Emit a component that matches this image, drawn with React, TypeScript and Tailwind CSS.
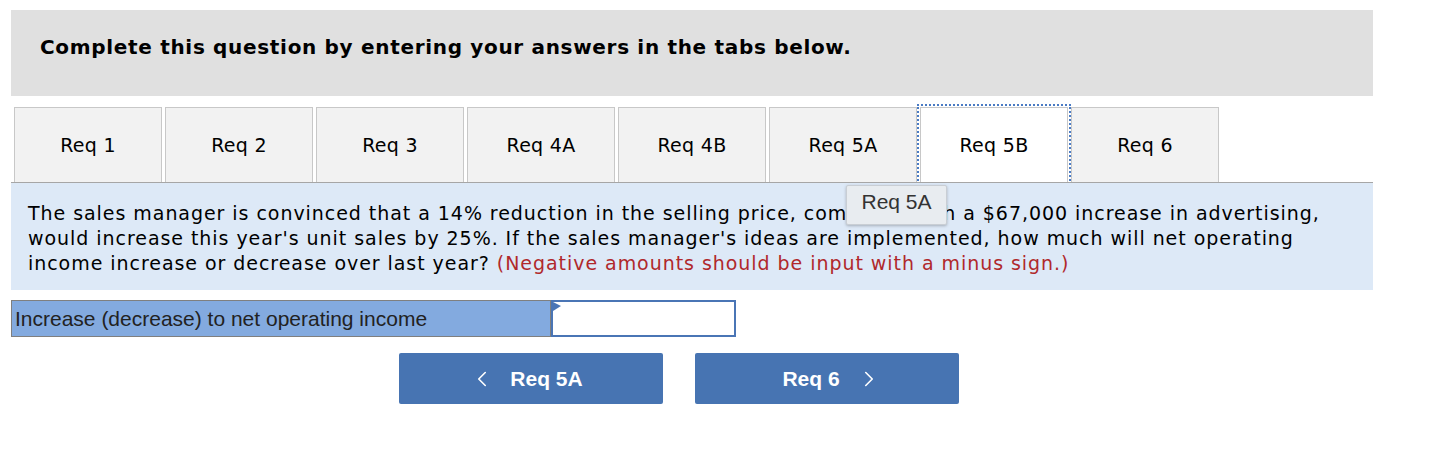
import { ChevronLeft, ChevronRight } from "lucide-react";

const tabs = ["Req 1", "Req 2", "Req 3", "Req 4A", "Req 4B", "Req 5A", "Req 5B", "Req 6"];

export default function App() {
  const active = "Req 5B";

  return (
    <div className="min-h-[450px] bg-white pt-[10px] pl-[11px] font-['DejaVu_Sans',sans-serif] text-black">
      <div className="w-[1362px]">
        <div className="flex h-[86px] bg-[#e0e0e0] pt-[24px] pl-[29px]">
          <h1 className="text-[20px] leading-[26px] font-bold tracking-[0.68px]">
            Complete this question by entering your answers in the tabs below.
          </h1>
        </div>

        <div className="mt-[11px] flex gap-[3px] border-b border-[#a6a6a6] pl-[3px]">
          {tabs.map((t) => {
            const isActive = t === active;
            return (
              <div
                key={t}
                className={
                  isActive
                    ? "flex h-[75px] w-[148px] items-center justify-center border border-b-0 border-[#c8c8c8] bg-white text-[19px] tracking-[0.3px] outline-2 outline-offset-1 outline-dotted outline-[#4a7bc4]"
                    : "flex h-[75px] w-[148px] items-center justify-center border border-b-0 border-[#c8c8c8] bg-[#f2f2f2] text-[19px] tracking-[0.3px]"
                }
              >
                {t}
              </div>
            );
          })}
        </div>

        <div className="relative bg-[#dde9f7] px-[17px] pt-[18px] pb-[14px] text-[19px] leading-[25px] tracking-[0.95px] whitespace-nowrap">
          The sales manager is convinced that a 14% reduction in the selling price, combined with a $67,000 increase in advertising,
          <br />
          would increase this year's unit sales by 25%. If the sales manager's ideas are implemented, how much will net operating
          <br />
          income increase or decrease over last year?{" "}
          <span className="text-[#b0282b]">(Negative amounts should be input with a minus sign.)</span>
          <div className="absolute top-[2px] left-[835px] flex h-[40px] w-[101px] justify-center rounded-[2px] border border-[#c9ced4] bg-[#e8ecf0] pt-[4px] font-['Liberation_Sans',sans-serif] text-[21px] leading-[24px] tracking-normal text-[#333] shadow-[0_1px_3px_rgba(0,0,0,0.25)]">
            Req 5A
          </div>
        </div>

        <div className="mt-[10px] flex h-[37px] font-['Liberation_Sans',sans-serif]">
          <div className="flex w-[540px] items-center border border-[#7f7f7f] bg-[#83aadf] pl-[3px] text-[21px] text-[#222]">
            Increase (decrease) to net operating income
          </div>
          <div className="relative w-[185px] border-2 border-[#4a75b5] bg-white">
            <svg className="absolute top-0 left-0" width="8" height="10" viewBox="0 0 8 10">
              <polygon points="0,0 8,4 0,9" fill="#4a75b5" />
            </svg>
          </div>
        </div>

        <div className="mt-[16px] flex gap-[32px] pl-[388px] font-['Liberation_Sans',sans-serif]">
          <button className="flex h-[51px] w-[264px] items-center justify-center gap-[25px] rounded-[2px] bg-[#4774b2] text-[21px] font-bold text-white">
            <ChevronLeft size={26} strokeWidth={1.5} className="-mx-[10px]" />
            <span>Req 5A</span>
          </button>
          <button className="flex h-[51px] w-[264px] items-center justify-center gap-[26px] rounded-[2px] bg-[#4774b2] text-[21px] font-bold text-white">
            <span>Req 6</span>
            <ChevronRight size={26} strokeWidth={1.5} className="-mx-[10px]" />
          </button>
        </div>
      </div>
    </div>
  );
}
